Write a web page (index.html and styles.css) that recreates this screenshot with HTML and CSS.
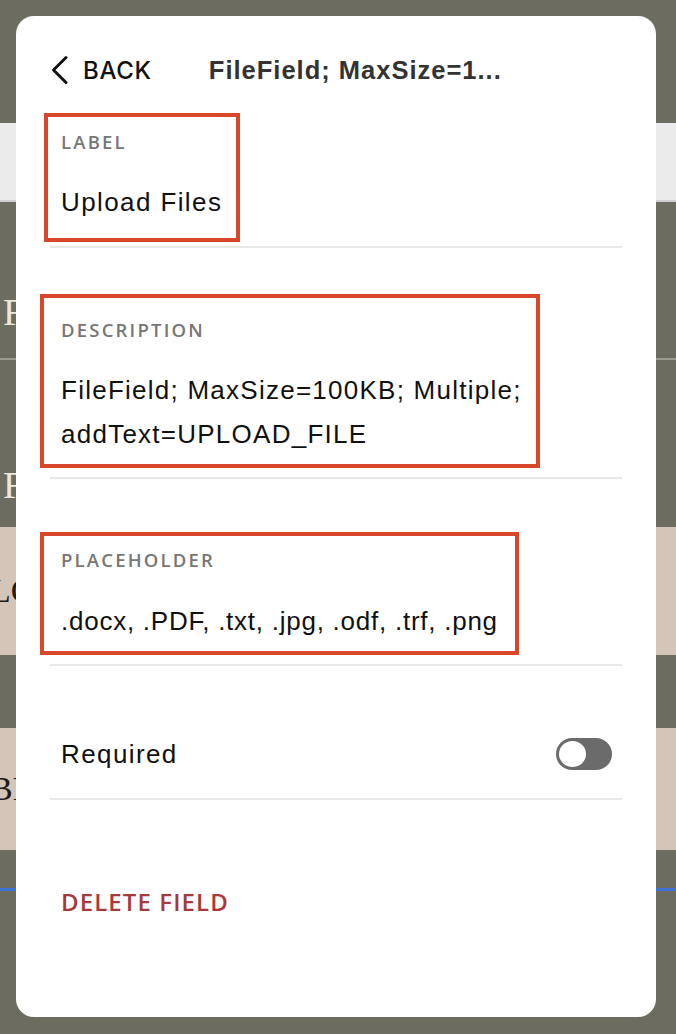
FILE: index.html
```html
<!DOCTYPE html>
<html lang="en">
<head>
<meta charset="utf-8">
<title>Edit Field</title>
<link rel="stylesheet" href="styles.css">
</head>
<body>
<div class="page">
  <div class="page-top"></div>
  <div class="page-band"></div>
  <div class="page-row page-row--first"><span class="page-letter">F</span></div>
  <div class="page-row page-row--second"><span class="page-letter">F</span></div>
  <div class="page-card page-card--first"><span class="page-card-text">LC</span></div>
  <div class="page-gap"></div>
  <div class="page-card page-card--second"><span class="page-card-text">BN</span></div>
  <div class="page-blue"></div>
</div>

<div class="modal">
  <div class="modal-header">
    <svg class="chevron" width="20" height="30" viewBox="0 0 20 30" aria-hidden="true">
      <polyline points="17,2.5 4.5,15 17,27.5" fill="none" stroke="#111" stroke-width="3" stroke-linecap="round" stroke-linejoin="round"/>
    </svg>
    <span class="back">BACK</span>
    <span class="title">FileField; MaxSize=1...</span>
  </div>

  <div class="box box--label">
    <div class="field-label">LABEL</div>
    <div class="field-value">Upload Files</div>
  </div>
  <div class="divider divider--label"></div>

  <div class="box box--desc">
    <div class="field-label">DESCRIPTION</div>
    <div class="field-value field-value--multi">FileField; MaxSize=100KB; Multiple;<br>addText=UPLOAD_FILE</div>
  </div>
  <div class="divider"></div>

  <div class="box box--placeholder">
    <div class="field-label">PLACEHOLDER</div>
    <div class="field-value field-value--ph">.docx, .PDF, .txt, .jpg, .odf, .trf, .png</div>
  </div>
  <div class="divider"></div>

  <div class="required-row">
    <span class="required-text">Required</span>
    <span class="toggle"><span class="toggle-knob"></span></span>
  </div>
  <div class="divider divider--flush"></div>

  <div class="delete">DELETE FIELD</div>
</div>
</body>
</html>
```

FILE: styles.css
```css
html, body {
  margin: 0;
  padding: 0;
}

body {
  width: 676px;
  height: 1034px;
  overflow: hidden;
  background: #6d6c60;
  font-family: "Liberation Sans", Arial, sans-serif;
  position: relative;
}

/* ---------- page behind the modal ---------- */
.page {
  display: flex;
  flex-direction: column;
}

.page-top {
  height: 123px;
}

.page-band {
  height: 77px;
  background: #ebebeb;
  border-bottom: 2px solid #cfcfcf;
}

.page-row {
  display: flex;
  align-items: flex-end;
  padding-left: 3px;
  box-sizing: border-box;
}

.page-row--first {
  height: 158px;
  padding-bottom: 26px;
  border-bottom: 2px solid #9c9b92;
}

.page-row--second {
  height: 167px;
  padding-bottom: 22px;
}

.page-letter {
  font-family: "Liberation Serif", "Times New Roman", serif;
  font-size: 38px;
  line-height: 40px;
  color: #ebe7df;
}

.page-card {
  background: #d5c5b9;
  display: flex;
  align-items: center;
  overflow: hidden;
}

.page-card--first {
  height: 128px;
}

.page-card--second {
  height: 122px;
}

.page-card-text {
  font-family: "Liberation Serif", "Times New Roman", serif;
  font-size: 34px;
  color: #1e1c1a;
  text-indent: -10px;
  display: block;
}

.page-gap {
  height: 73px;
}

.page-blue {
  margin-top: 38px;
  height: 3px;
  background: #3f72d6;
}

/* ---------- modal ---------- */
.modal {
  position: absolute;
  left: 16px;
  top: 16px;
  width: 640px;
  height: 1001px;
  box-sizing: border-box;
  background: #ffffff;
  border-radius: 18px;
  padding-top: 34px;
  display: flex;
  flex-direction: column;
}

.modal-header {
  height: 40px;
  display: flex;
  align-items: center;
  padding-left: 33px;
}

.chevron {
  display: block;
  flex: none;
}

.back {
  margin-left: 14px;
  font-family: Inter, "Liberation Sans", sans-serif;
  font-weight: 500;
  font-size: 24px;
  letter-spacing: 0.7px;
  color: #111111;
}

.title {
  margin-left: 57px;
  font-weight: 700;
  font-size: 25.5px;
  letter-spacing: 1px;
  color: #333333;
  white-space: nowrap;
}

.box {
  box-sizing: border-box;
  border: 4px solid #d9472b;
  padding-left: 17px;
}

.box--label {
  margin-top: 23px;
  margin-left: 28px;
  width: 196px;
  height: 129px;
  padding-left: 13px;
  padding-top: 13px;
}

.box--desc {
  margin-top: 46px;
  margin-left: 24px;
  width: 500px;
  height: 174px;
  padding-top: 20px;
}

.box--placeholder {
  margin-top: 53px;
  margin-left: 24px;
  width: 479px;
  height: 123px;
  padding-top: 12px;
}

.field-label {
  font-family: "Open Sans", "Liberation Sans", sans-serif;
  font-weight: 600;
  font-size: 18.5px;
  line-height: 24px;
  letter-spacing: 2.2px;
  color: #767676;
}

.field-value {
  margin-top: 30px;
  font-size: 26px;
  line-height: 36px;
  letter-spacing: 1.4px;
  color: #111111;
  white-space: nowrap;
}

.field-value--multi {
  margin-top: 26px;
  line-height: 44px;
  letter-spacing: 1.25px;
}

.field-value--ph {
  margin-top: 31px;
  letter-spacing: 0.75px;
}

.divider {
  margin: 9px 34px 0;
  height: 2px;
  background: #e8e8e8;
  flex: none;
}

.divider--label {
  margin-top: 4px;
}

.divider--flush {
  margin-top: 0;
}

.required-row {
  display: flex;
  align-items: center;
  justify-content: space-between;
  padding: 72px 44px 28px 45px;
}

.required-text {
  font-size: 26px;
  letter-spacing: 1.4px;
  color: #111111;
  line-height: 32px;
}

.toggle {
  width: 56px;
  height: 32px;
  border-radius: 16px;
  background: #6b6b6b;
  box-sizing: border-box;
  padding: 3px;
  display: flex;
  align-items: center;
}

.toggle-knob {
  width: 27px;
  height: 26px;
  border-radius: 50%;
  background: #ffffff;
}

.delete {
  margin-top: 90px;
  padding-left: 45px;
  font-family: "Open Sans", "Liberation Sans", sans-serif;
  font-weight: 600;
  font-size: 24px;
  line-height: 24px;
  letter-spacing: 1.1px;
  color: #a7393d;
}
```
